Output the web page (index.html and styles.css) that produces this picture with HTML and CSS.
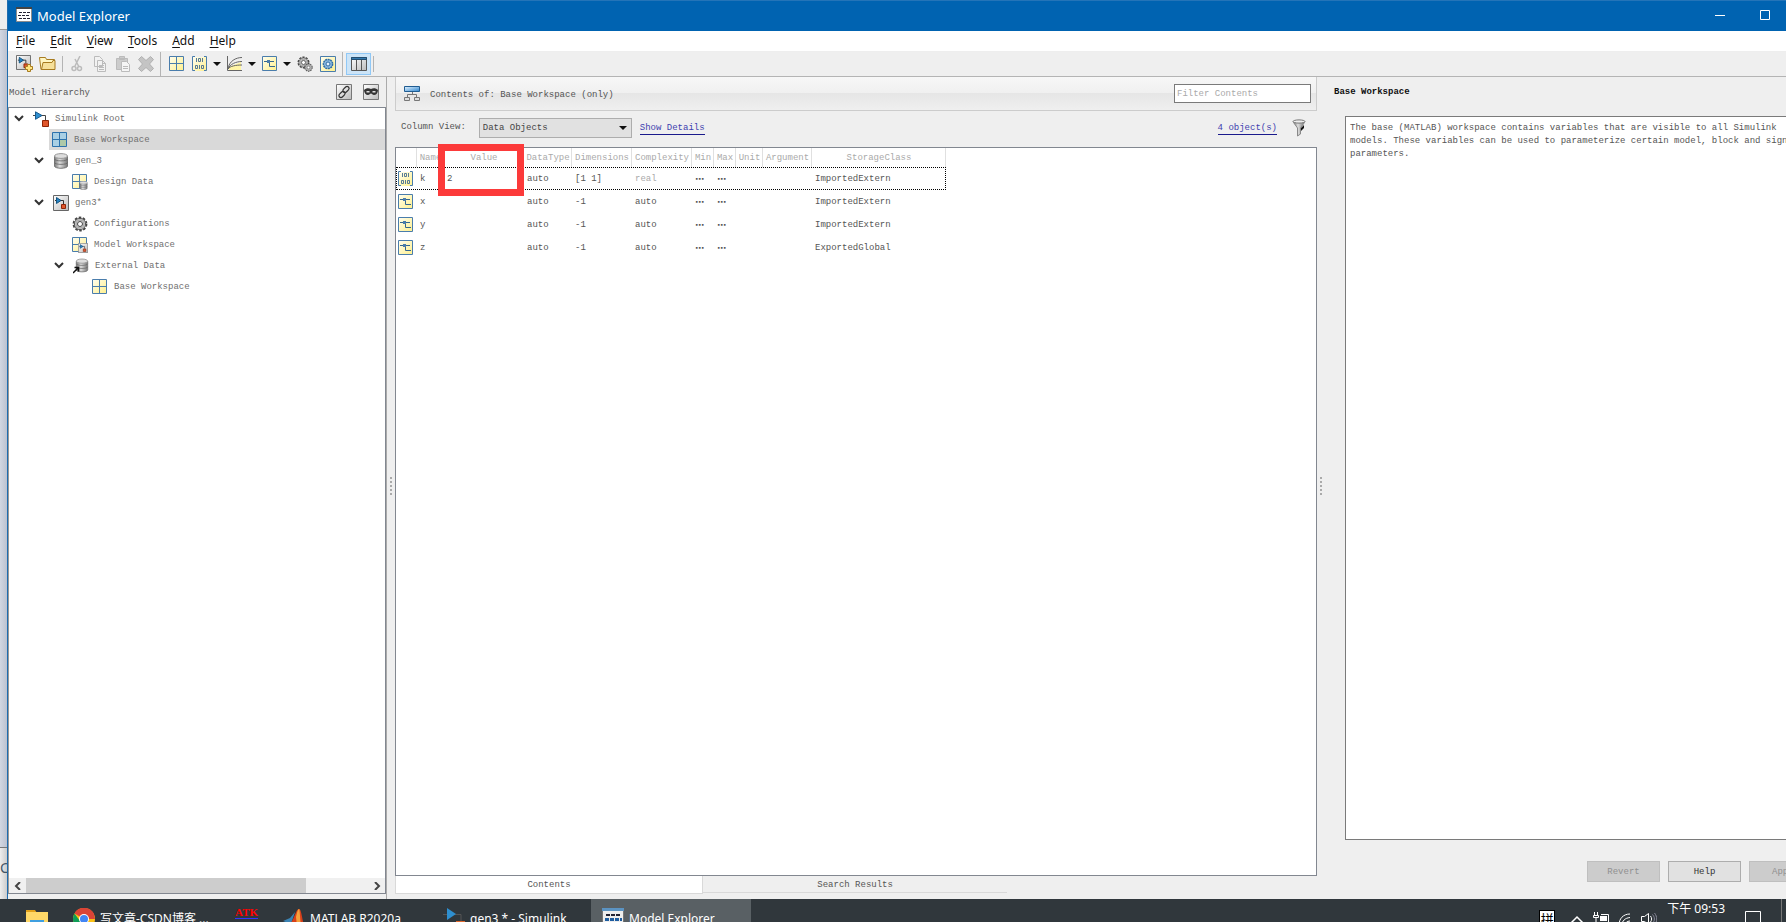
FILE: index.html
```html
<!DOCTYPE html>
<html lang="en">
<head>
<meta charset="utf-8">
<title>Model Explorer</title>
<link rel="stylesheet" href="styles.css">
</head>
<body>
<svg class="defs" aria-hidden="true">
  <defs>
    <linearGradient id="gy" x1="0" y1="0" x2="1" y2="1"><stop offset="0" stop-color="#fffef0"/><stop offset="1" stop-color="#fff08c"/></linearGradient>
    <linearGradient id="gm" x1="0" y1="0" x2="1" y2="0"><stop offset="0" stop-color="#777"/><stop offset=".4" stop-color="#ddd"/><stop offset="1" stop-color="#777"/></linearGradient>
    <linearGradient id="gw" x1="0" y1="0" x2="1" y2="1"><stop offset="0" stop-color="#fff"/><stop offset="1" stop-color="#bbb"/></linearGradient>
    <linearGradient id="gb" x1="0" y1="0" x2="1" y2="1"><stop offset="0" stop-color="#e4f3ff"/><stop offset="1" stop-color="#2e86cf"/></linearGradient>
    <symbol id="grid" viewBox="0 0 16 16"><path fill="url(#gy)" stroke="#4a7dac" d="M.5.5h14v14H.5zM7.500 1v13M1 7.500h13"/></symbol>
    <symbol id="grid-blue" viewBox="0 0 16 16"><path fill="#a9cfe4" stroke="#2d72ad" d="M.5.5h14v14H.5z"/><path fill="#aec9a8" d="M8 8h6v6H8z"/><path fill="none" stroke="#2d72ad" d="M7.500 1v13M1 7.500h13"/></symbol>
    <symbol id="db" viewBox="0 0 16 16"><path fill="url(#gm)" stroke="#777" d="M1.500 3v10c0 3 13 3 13 0V3"/><ellipse cx="8" cy="3" rx="6.500" ry="2.400" fill="#ddd" stroke="#999"/><path fill="none" stroke="#666" stroke-width=".8" d="M1.500 6c0 2.500 13 2.500 13 0M1.500 9.500c0 2.500 13 2.500 13 0"/></symbol>
    <symbol id="blocks" viewBox="0 0 16 16"><path fill="none" stroke="#444" d="M0 4.500h12.500v5"/><path fill="#2e8fd0" stroke="#175a8e" d="M2.500.8v7.500L9 4.500z"/><path fill="#e0572c" stroke="#8e2507" d="M9.500 9.500h6v6h-6z"/></symbol>
    <symbol id="model" viewBox="0 0 16 16"><path fill="url(#gw)" stroke="#666" d="M.5.5h15v15H.5z"/><path fill="none" stroke="#333" d="M2 5.500h8.500V9"/><path fill="#2582c4" stroke="#155580" d="M3.500 2.500v6L8 5.500z"/><path fill="#e0572c" stroke="#8e2507" d="M8.500 9.500h4v4h-4z"/></symbol>
    <symbol id="gear" viewBox="0 0 16 16"><circle cx="8" cy="8" r="6.500" fill="none" stroke="#444" stroke-width="1.800" stroke-dasharray="2.600 1.480"/><circle cx="8" cy="8" r="5.600" fill="#ddd" stroke="#555"/><circle cx="8" cy="8" r="4" fill="none" stroke="#aaa" stroke-width="1.500"/><circle cx="8" cy="8" r="2.500" fill="#fff" stroke="#444"/></symbol>
    <symbol id="matrix" viewBox="0 0 16 16"><path fill="url(#gy)" d="M1 1h14v14H1z"/><path fill="none" stroke="#4a7dac" d="M3 .5H.5v14H3M12 .5h2.500v14H12"/><path fill="none" stroke="#446c90" stroke-width=".9" d="M4.500 2v4M10.500 2v4M6.500 2.500h2v3h-2zM3.500 9.500h2v3h-2zM7.500 9v4M9.500 9.500h2v3h-2z"/></symbol>
    <symbol id="signal" viewBox="0 0 16 16"><path fill="url(#gy)" stroke="#4a7dac" d="M.5.5h14v14H.5z"/><path fill="none" stroke="#35678f" d="M2 5.500h10M7.500 5.500v5h5.500"/><path fill="#4a7dac" d="M5 4h3v3H5z"/></symbol>
    <symbol id="curves" viewBox="0 0 16 16"><path fill="#fff5a5" d="M2 11l12-5v9H2z"/><path fill="none" stroke="#666" d="M.5 0v14.500H15M1 13C2 5 9 1.500 15 1.500M1 13C3 8 9 5.500 15 5.500M1 13c2-3 8-4 14-4"/></symbol>
    <symbol id="folder" viewBox="0 0 17 14"><path fill="#fff6c2" stroke="#a77b20" d="M.5.500h6l1 2h8v10H2z"/><path fill="#f6e09a" stroke="#a77b20" d="M2.500 12.500L4 5.500h9l1-2h2v9z"/></symbol>
    <symbol id="linkbox" viewBox="0 0 16 16"><path fill="url(#gw)" stroke="#777" d="M.5.5h15v15H.5z"/><g fill="none" stroke="#333" stroke-width="1.200"><rect x="6.500" y="3.500" width="7" height="4" rx="2" transform="rotate(-45 10 5.500)"/><rect x="2.500" y="8.500" width="7" height="4" rx="2" transform="rotate(-45 6 10.500)"/></g></symbol>
    <symbol id="mask" viewBox="0 0 16 16"><path fill="url(#gw)" stroke="#777" d="M.5.5h15v15H.5z"/><path fill="#333" d="M1 6c2-2 5-2 7-1 2-1 5-1 7 1 0 3-2 5-4 5-1.500 0-2-1.500-3-1.500S6.500 11 5 11C3 11 1 9 1 6z"/><path fill="#ddd" d="M3.500 7h3v1.500h-3zM9.500 7h3v1.500h-3z"/></symbol>
    <symbol id="tree" viewBox="0 0 16 16"><path fill="url(#gb)" stroke="#205c91" d="M.5.5h15v5H.5z"/><path fill="none" stroke="#777" d="M8.500 6v3M3.500 12V8.500h9V12"/><path fill="#ddd" stroke="#777" d="M.5 11.500h5v3h-5zM10.500 11.500h5v3h-5z"/></symbol>
    <symbol id="chev" viewBox="0 0 10 7"><path fill="none" stroke="#333" stroke-width="2" d="M1 1l4 4 4-4"/></symbol>
    <symbol id="tri" viewBox="0 0 8 4"><path d="M0 0h8L4 4z" fill="#111"/></symbol>
    <symbol id="listwin" viewBox="0 0 16 16"><path fill="#fff" stroke="#8c8c8c" d="M.5.5h15v14H.5z"/><path stroke="#444" stroke-width="2" d="M0 1h16"/><path fill="none" stroke="#223" stroke-dasharray="3 1" d="M3 5.500h11M2 8.500h12M3 11.500h11"/></symbol>
  </defs>
</svg>

<div class="screen">
  <div class="desktop">
    <div class="behind" aria-hidden="true"><div class="behind-top"></div><div class="behind-mid"></div><div class="behind-low">C</div></div>
    <main class="window">
      <header class="titlebar">
        <svg class="i16"><use href="#listwin"/></svg>
        <h1>Model Explorer</h1>
        <div class="winbtns">
          <button aria-label="Minimize"><svg width="10" height="10"><path stroke="#fff" d="M0 5.500h10"/></svg></button>
          <button aria-label="Maximize"><svg width="10" height="10"><path fill="none" stroke="#fff" d="M.5.5h9v9h-9z"/></svg></button>
        </div>
      </header>
      <nav class="menubar">
        <button><u>F</u>ile</button><button><u>E</u>dit</button><button><u>V</u>iew</button><button><u>T</u>ools</button><button><u>A</u>dd</button><button><u>H</u>elp</button>
      </nav>
      <div class="toolbar">
        <button aria-label="New model"><svg class="i18" viewBox="0 0 18 18"><use href="#model" width="15" height="15"/><path fill="#ffe682" stroke="#a77b20" d="M11.500 9.500h3v2h2v3h-2v2h-3v-2h-2v-3h2z"/></svg></button>
        <button aria-label="Open"><svg width="17" height="14"><use href="#folder"/></svg></button>
        <span class="sep short"></span>
        <button aria-label="Cut" disabled><svg class="i16" viewBox="0 0 16 16"><g fill="none" stroke="#bbb" stroke-width="1.500"><path d="M11 0L6 10M6 3l4 8"/><circle cx="5" cy="12.500" r="2"/><circle cx="10.500" cy="12.500" r="2"/></g></svg></button>
        <button aria-label="Copy" disabled><svg class="i16" viewBox="0 0 16 16"><path fill="#f2f2f2" stroke="#bbb" d="M2.500.5h5l3 3v7h-8zM5.500 4.500h5l3 3v8h-8zM7 9.500h5M7 11.500h5M7 13.500h5M10.500 4.500v3h3"/></svg></button>
        <button aria-label="Paste" disabled><svg class="i16" viewBox="0 0 16 16"><path fill="#ccc" stroke="#bbb" d="M1.500 2.500h11v11h-11zM4.500.5h5v3h-5z"/><path fill="#f5f5f5" stroke="#bbb" d="M6.500 5.500h5l3 3v7h-8zM8 10.500h5M8 12.500h5"/></svg></button>
        <button aria-label="Delete" disabled><svg class="i16" viewBox="0 0 16 16"><path fill="#c4c4c4" stroke="#b0b0b0" d="M3.500.5L8 4.500l4.500-4 3 3-4 4.500 4 4.500-3 3L8 11.500l-4.500 4-3-3L4.500 8l-4-4.500z"/></svg></button>
        <span class="sep"></span>
        <button aria-label="Add variable"><svg class="i16"><use href="#grid"/></svg></button>
        <button aria-label="Add parameter"><svg class="i16"><use href="#matrix"/></svg></button>
        <button class="drop" aria-label="Parameter types"><svg width="8" height="4"><use href="#tri"/></svg></button>
        <button aria-label="Add lookup table"><svg class="i16"><use href="#curves"/></svg></button>
        <button class="drop" aria-label="Table types"><svg width="8" height="4"><use href="#tri"/></svg></button>
        <button aria-label="Add signal"><svg class="i16"><use href="#signal"/></svg></button>
        <button class="drop" aria-label="Signal types"><svg width="8" height="4"><use href="#tri"/></svg></button>
        <button aria-label="Add configuration"><svg class="i16" viewBox="0 0 16 16"><use href="#gear" width="13" height="13"/><use href="#gear" x="7" y="7" width="9" height="9"/></svg></button>
        <button aria-label="Configuration reference"><svg class="i16" viewBox="0 0 16 16"><path fill="url(#gy)" stroke="#4a7dac" d="M.5.5h15v15H.5z"/><circle cx="8" cy="8" r="4.600" fill="#8db9df" stroke="#2f6da5" stroke-width="1.500" stroke-dasharray="2 .6"/><circle cx="8" cy="8" r="2" fill="#e5f2ff" stroke="#2f6da5"/></svg></button>
        <span class="sep"></span>
        <button class="on" aria-label="Show columns"><svg class="i16" viewBox="0 0 16 16"><path fill="url(#gw)" stroke="#555" d="M.5 1.500h15v13H.5zM5.500 4v10M10.500 4v10"/><path fill="#3479ae" stroke="#234e70" d="M.5 1.500h15v2H.5z"/></svg></button>
        <span class="sep short"></span>
      </div>

      <div class="panes">
        <section class="left">
          <div class="lefthead"><span>Model Hierarchy</span>
            <button aria-label="Follow links"><svg class="i16"><use href="#linkbox"/></svg></button>
            <button aria-label="Look under masks"><svg class="i16"><use href="#mask"/></svg></button>
          </div>
          <div class="treebox">
            <ul class="tree">
              <li class="l0"><svg class="chev"><use href="#chev"/></svg><svg class="i16"><use href="#blocks"/></svg><span>Simulink Root</span></li>
              <li class="l1 leaf sel"><svg class="i16"><use href="#grid-blue"/></svg><span>Base Workspace</span></li>
              <li class="l1"><svg class="chev"><use href="#chev"/></svg><svg class="i16"><use href="#db"/></svg><span>gen_3</span></li>
              <li class="l2 leaf"><svg class="i16" viewBox="0 0 16 16"><use href="#grid" width="16" height="16"/><use href="#db" x="7" y="7" width="9" height="9"/></svg><span>Design Data</span></li>
              <li class="l1"><svg class="chev"><use href="#chev"/></svg><svg class="i16"><use href="#model"/></svg><span>gen3*</span></li>
              <li class="l2 leaf"><svg class="i16"><use href="#gear"/></svg><span>Configurations</span></li>
              <li class="l2 leaf"><svg class="i16" viewBox="0 0 16 16"><use href="#grid" width="16" height="16"/><use href="#model" x="6" y="6" width="10" height="10"/></svg><span>Model Workspace</span></li>
              <li class="l2"><svg class="chev"><use href="#chev"/></svg><svg class="i16" viewBox="0 0 16 16"><use href="#db" x="2" width="14" height="15"/><path stroke="#111" stroke-width="1.500" fill="none" d="M0 15l5-5M1.500 9.500h4v4"/></svg><span>External Data</span></li>
              <li class="l3 leaf"><svg class="i16"><use href="#grid"/></svg><span>Base Workspace</span></li>
            </ul>
            <div class="scroll">
              <button aria-label="Scroll left"><svg width="8" height="8"><path fill="none" stroke="#444" stroke-width="2" d="M6 0L2 4l4 4"/></svg></button>
              <div class="track"><div class="thumb"></div></div>
              <button aria-label="Scroll right"><svg width="8" height="8"><path fill="none" stroke="#444" stroke-width="2" d="M2 0l4 4-4 4"/></svg></button>
            </div>
          </div>
        </section>
        <div class="split"><i></i><i></i><i></i><i></i><i></i></div>
        <section class="center">
          <div class="contenthead"><svg class="i16"><use href="#tree"/></svg><span>Contents of: Base Workspace (only)</span><input aria-label="Filter Contents" placeholder="Filter Contents"></div>
          <div class="viewrow">
            <label for="view">Column View:</label>
            <span class="selectwrap"><select id="view"><option>Data Objects</option></select><svg width="8" height="4"><use href="#tri"/></svg></span>
            <a href="#">Show Details</a>
            <a class="count" href="#">4 object(s)</a>
            <button aria-label="Filter"><svg class="i18" viewBox="0 0 18 18"><path fill="url(#gm)" stroke="#888" d="M3.500 3.500L7.500 9v8l3-2V9l4-5.500z"/><ellipse cx="9" cy="2.500" rx="6" ry="1.600" fill="#eee" stroke="#777"/><path fill="#111" d="M14 6v3l-3 3v-3z"/></svg></button>
          </div>
          <div class="tablebox">
            <table>
              <colgroup><col class="c21"><col class="c27"><col class="c80"><col class="c48"><col class="c60"><col class="c60"><col class="c22"><col class="c22"><col class="c27"><col class="c49"><col class="c134"></colgroup>
              <thead><tr><th></th><th>Name</th><th>Value</th><th>DataType</th><th>Dimensions</th><th>Complexity</th><th>Min</th><th>Max</th><th>Unit</th><th>Argument</th><th>StorageClass</th></tr></thead>
              <tbody>
                <tr class="focus"><td><svg class="i16"><use href="#matrix"/></svg></td><td>k</td><td>2</td><td>auto</td><td>[1 1]</td><td class="dim">real</td><td class="more">⋯</td><td class="more">⋯</td><td></td><td></td><td>ImportedExtern</td></tr>
                <tr><td><svg class="i16"><use href="#signal"/></svg></td><td>x</td><td></td><td>auto</td><td>-1</td><td>auto</td><td class="more">⋯</td><td class="more">⋯</td><td></td><td></td><td>ImportedExtern</td></tr>
                <tr><td><svg class="i16"><use href="#signal"/></svg></td><td>y</td><td></td><td>auto</td><td>-1</td><td>auto</td><td class="more">⋯</td><td class="more">⋯</td><td></td><td></td><td>ImportedExtern</td></tr>
                <tr><td><svg class="i16"><use href="#signal"/></svg></td><td>z</td><td></td><td>auto</td><td>-1</td><td>auto</td><td class="more">⋯</td><td class="more">⋯</td><td></td><td></td><td>ExportedGlobal</td></tr>
              </tbody>
            </table>
            <div class="mark"></div>
          </div>
          <div class="tabs"><button class="active">Contents</button><button>Search Results</button></div>
        </section>
        <div class="split"><i></i><i></i><i></i><i></i><i></i></div>
        <section class="right">
          <h2>Base Workspace</h2>
          <div class="desc">The base (MATLAB) workspace contains variables that are visible to all Simulink models. These variables can be used to parameterize certain model, block and signal parameters.</div>
          <div class="actions"><button disabled>Revert</button><button>Help</button><button disabled>Apply</button></div>
        </section>
      </div>
    </main>
  </div>

  <footer class="taskbar">
    <div class="tasks">
      <button class="t-files" aria-label="File Explorer"><svg class="i22" viewBox="0 0 22 22"><path fill="#e3a21a" d="M0 2h9l2 3H0z"/><path fill="#ffd868" d="M0 4h22v15H0z"/><path fill="#3f9fe0" d="M4 12h14v9H4z"/></svg></button>
      <button class="t-chrome"><svg class="i22" viewBox="0 0 22 22"><circle cx="11" cy="11" r="11" fill="#fbc116"/><path fill="#db4437" d="M11 11H22A11 11 0 0 0 1.500 5.500z"/><path fill="#db4437" d="M1.500 5.500A11 11 0 0 1 21 6H11z"/><path fill="#0f9d58" d="M1.500 5.500A11 11 0 0 0 10 22l3-8-6-1z"/><circle cx="11" cy="11" r="5" fill="#fff"/><circle cx="11" cy="11" r="4" fill="#4285f4"/></svg><span>写文章-CSDN博客 ...</span></button>
      <button class="t-atk"><span>ATK</span><span>XCOM</span></button>
      <button class="t-wide"><svg class="i22" viewBox="0 0 22 22"><path fill="#3b84b5" d="M0 13l7-3 5-6-4 12z"/><path fill="#d8401b" d="M7 16C11 12 13 1 16 1s3 14 6 18c-5-3-7-1-10 3z"/><path fill="#f7a13b" d="M13 9c1-5 2-8 3-8s1 11 2 16l-4 1z"/></svg><span>MATLAB R2020a</span></button>
      <button class="t-wide"><svg class="i22" viewBox="0 0 22 22"><path fill="none" stroke="#555" d="M0 6.500h18v7"/><path fill="#2e8fd0" d="M4 0v12l9-6z"/><path fill="#e0672c" d="M13 13h9v9h-9z"/></svg><span>gen3 * - Simulink</span></button>
      <button class="t-wide current"><svg class="i22" viewBox="0 0 22 22"><path fill="#eee" stroke="#777" d="M.5.5h21v20H.5z"/><path fill="#5b93c2" d="M0 0h22v3H0z"/><path fill="none" stroke="#223" stroke-width="2" stroke-dasharray="4 1" d="M4 7h14"/><path fill="none" stroke="#1e5da0" stroke-width="3" stroke-dasharray="4 1" d="M3 11.500h17M3 16h17"/></svg><span>Model Explorer</span></button>
    </div>
    <div class="tray">
      <span class="ime">拼</span>
      <svg class="i16" viewBox="0 0 16 16"><path fill="none" stroke="#fff" stroke-width="1.500" d="M2 12l6-6 6 6"/></svg>
      <svg class="i16" viewBox="0 0 16 16"><path fill="none" stroke="#fff" d="M1.500 1v3M4.500 1v3M.5 4.500h5v2h-5zM3 7v5h2M8 3.500h7.500v8H6"/><path fill="#fff" d="M7 5h7v5H7z"/></svg>
      <svg class="i16" viewBox="0 0 16 16"><path fill="none" stroke="#fff" d="M2 14C2 8 6 3 13 3M5 14c0-4 3-7 8-7.500M8 14c0-2 2-4 5-4"/></svg>
      <svg class="i16" viewBox="0 0 16 16"><path fill="none" stroke="#fff" d="M.5 5.500h3l4-3v11l-4-3h-3zM9.500 5c1.500 2 1.500 4 0 6"/><path fill="none" stroke="#889" d="M11.500 3.500c2.500 3 2.500 6 0 9M13.500 2c3 4 3 8 0 12"/></svg>
      <time>下午 09:53</time>
      <svg class="i16 note" viewBox="0 0 16 16"><path fill="none" stroke="#fff" d="M.5.5h15v12h-4l-3 3v-3h-8z"/></svg>
      <span class="peek"></span>
    </div>
  </footer>
</div>
</body>
</html>
```
FILE: styles.css
```css
* { box-sizing: border-box; }
body { margin: 0; overflow: hidden; font: 9px/13px "Liberation Mono", "Noto Sans CJK SC", monospace; color: #555; }
button { margin: 0; padding: 0; border: 0; background: none; color: inherit; font: inherit; }
svg { display: block; flex: none; }
.defs { position: absolute; width: 0; height: 0; }
.i16 { width: 16px; height: 16px; }
.i18 { width: 18px; height: 18px; }
.i22 { width: 22px; height: 22px; }

.screen { height: 100vh; display: flex; flex-direction: column; overflow: hidden; }
.desktop { flex: 1; min-height: 0; display: flex; }

.behind { width: 7px; flex: none; display: flex; flex-direction: column; background: #e8e8e8; overflow: hidden; }
.behind-top { height: 30px; border-bottom: 1px solid #999; background: #eee; }
.behind-mid { flex: 1; background: linear-gradient(90deg, #d2d7e2, #bcc2d0); border-bottom: 1px solid #777; }
.behind-low { height: 51px; padding-top: 12px; font: 14px/16px "Noto Sans", sans-serif; color: #456; background: linear-gradient(90deg, #eee, #ccc); }

.window { flex: none; width: calc(100% + 33px); display: flex; flex-direction: column; border-left: 1px solid #1f6cae; background: #efefef; }
.titlebar { height: 31px; flex: none; display: flex; align-items: center; gap: 5px; padding: 0 56px 2px 8px; background: #0063b1; border-top: 1px solid #2474b8; }
.titlebar h1 { flex: 1; margin: 0; padding-top: 1px; font: 13px/18px "Noto Sans", sans-serif; color: #fff; }
.winbtns { display: flex; gap: 35px; }

.menubar { height: 21px; flex: none; display: flex; gap: 15px; padding-left: 8px; background: #fff; border-bottom: 1px solid #eee; font: 12px/20px "Noto Sans", sans-serif; color: #111; }
.menubar u { text-underline-offset: 2px; }
.toolbar { height: 25px; flex: none; display: flex; align-items: center; padding-left: 5px; border-bottom: 1px solid #b4b4b4; }
.toolbar button { width: 23px; height: 20px; display: grid; place-items: center; }
.toolbar .drop { width: 12px; }
.toolbar .on { background: #cce4f7; outline: 1px solid #90c8f6; }
.sep { width: 8px; align-self: stretch; background: linear-gradient(#b4b4b4, #b4b4b4) 3px 0 / 1px 100% no-repeat; }
.sep.short { width: 6px; align-self: center; height: 16px; }

.panes { flex: 1; min-height: 0; display: grid; grid-template-columns: 379px 8px 922fr 8px 501fr; }
.left { display: flex; flex-direction: column; padding-bottom: 5px; min-height: 0; border-right: 1px solid #aaa; }
.lefthead { height: 30px; display: flex; align-items: center; gap: 11px; padding: 0 7px 0 1px; }
.lefthead span { flex: 1; padding-top: 2px; }
.treebox { flex: 1; min-height: 0; display: flex; flex-direction: column; background: #fff; border: 1px solid #828790; border-left-color: #999; }
.tree { flex: 1; margin: 0; padding: 0; list-style: none; color: #707070; }
.tree li { display: flex; align-items: center; height: 21px; }
.tree .chev { width: 10px; height: 7px; margin-right: 9px; }
.tree span { margin-left: 6px; padding-top: 2px; }
.l0 { padding-left: 5px; }
.l1 { padding-left: 25px; }
.l2 { padding-left: 45px; }
.l1.leaf { margin-left: 40px; padding-left: 3px; }
.l2.leaf { padding-left: 63px; }
.l3.leaf { padding-left: 83px; }
.sel { background: #d9d9d9; }
.scroll { height: 15px; display: flex; background: #f0f0f0; }
.scroll button { width: 17px; display: grid; place-items: center; }
.track { flex: 1; }
.thumb { width: 82%; height: 100%; background: #cdcdcd; }

.split { display: flex; flex-direction: column; align-items: center; justify-content: center; gap: 2px; padding-bottom: 4px; }
.split i { width: 2px; height: 2px; background: #aaa; }

.center { display: flex; flex-direction: column; min-width: 0; min-height: 0; padding-bottom: 5px; }
.contenthead { height: 34px; flex: none; display: flex; align-items: center; padding: 0 5px 0 8px; border: 1px solid #ccc; border-top: 0; background: linear-gradient(#f7f7f7, #f0f0f0 48%, #e6e6e6 50%, #efefef); }
.contenthead span { flex: 1; margin-left: 10px; padding-top: 4px; }
.contenthead input { width: 137px; height: 19px; padding: 1px 2px 0; border: 1px solid #7a7a7a; background: #fff; font: inherit; }
.contenthead input::placeholder { color: #aaa; opacity: 1; }
.viewrow { height: 36px; flex: none; display: flex; align-items: center; padding: 0 9px 3px 6px; }
.selectwrap { position: relative; margin: 0 8px 0 13px; }
.selectwrap select { display: block; width: 153px; height: 20px; padding: 1px 3px 0; appearance: none; border: 1px solid #adadad; border-radius: 0; background: #e1e1e1; color: #444; font: inherit; }
.selectwrap svg { position: absolute; right: 5px; top: 8px; }
.viewrow a { color: #3f3fb0; text-decoration: none; border-bottom: 1px solid #1a1a8c; line-height: 12px; padding-top: 2px; }
.viewrow .count { margin: 0 13px 0 auto; }
.tablebox { position: relative; flex: 1; min-height: 0; border: 1px solid #828790; background: #fff; }
table { table-layout: fixed; width: 550px; border-collapse: collapse; }
.c21 { width: 21px; } .c22 { width: 22px; } .c27 { width: 27px; } .c48 { width: 48px; } .c49 { width: 49px; } .c60 { width: 60px; } .c80 { width: 80px; } .c134 { width: 134px; }
th { height: 19px; padding: 2px 0 0; overflow: hidden; white-space: nowrap; font-weight: 400; color: #aaa; box-shadow: inset -1px 0 #e0e0e0; }
td { height: 23px; padding: 2px 3px 0; white-space: nowrap; }
td:first-child { padding: 0 2px; }
.more { font-family: "DejaVu Sans", sans-serif; font-weight: 700; }
.dim { color: #aaa; }
.focus { outline: 1px dotted #000; outline-offset: -1px; }
.mark { position: absolute; left: 42px; top: -4px; width: 86px; height: 52px; border: 7px solid #fc3a3a; }
.tabs { display: flex; align-items: flex-start; flex: none; height: 18px; }
.tabs button { width: 33%; height: 17px; padding-top: 2px; border-bottom: 1px solid #d9d9d9; }
.tabs .active { flex: 0 0 308px; height: 18px; background: #fff; border: 1px solid #d9d9d9; border-top: 0; }

.right { display: flex; flex-direction: column; min-width: 0; padding: 9px 4px 17px 9px; }
.right h2 { margin: 0 0 17px; font-size: 9px; line-height: 13px; color: #111; }
.desc { flex: 1; margin-left: 11px; padding: 5px 4px 4px; border: 1px solid #7a7a7a; background: #fff; }
.actions { display: flex; justify-content: flex-end; gap: 8px; margin-top: 21px; }
.actions button { width: 73px; height: 21px; padding-top: 1px; border: 1px solid #adadad; background: #e1e1e1; color: #333; }
.actions button:disabled { background: #ccc; border-color: #bfbfbf; color: #909090; }

.taskbar { height: 23px; flex: none; display: flex; justify-content: space-between; align-items: flex-start; overflow: hidden; background: #30373c; color: #fff; font: 12px/18px "Noto Sans", "Noto Sans CJK SC", sans-serif; }
.tasks { display: flex; }
.tasks button { display: flex; align-items: center; gap: 5px; height: 40px; padding-left: 12px; white-space: nowrap; }
.tasks .t-files { width: 61px; padding-left: 26px; }
.tasks .t-chrome { width: 162px; }
.tasks .t-atk { width: 48px; flex-direction: column; align-items: flex-start; gap: 0; padding-top: 7px; font: bold 11px/12px "Liberation Serif", serif; color: #f00; }
.t-atk span:first-child { border-bottom: 1px solid #33f; }
.tasks .t-wide { width: 160px; }
.tasks .current { padding-left: 11px; background: #596064; }
.tray { display: flex; align-items: center; height: 40px; gap: 8px; padding-right: 4px; }
.ime { width: 16px; height: 18px; background: #fff; color: #000; border: 1px solid #000; font-size: 13px; line-height: 16px; margin-right: 6px; text-align: center; }
.tray time { align-self: flex-start; margin: 1px 12px 0 2px; }
.note { margin-right: 12px; }
.peek { width: 1px; height: 40px; background: #777; }
```
